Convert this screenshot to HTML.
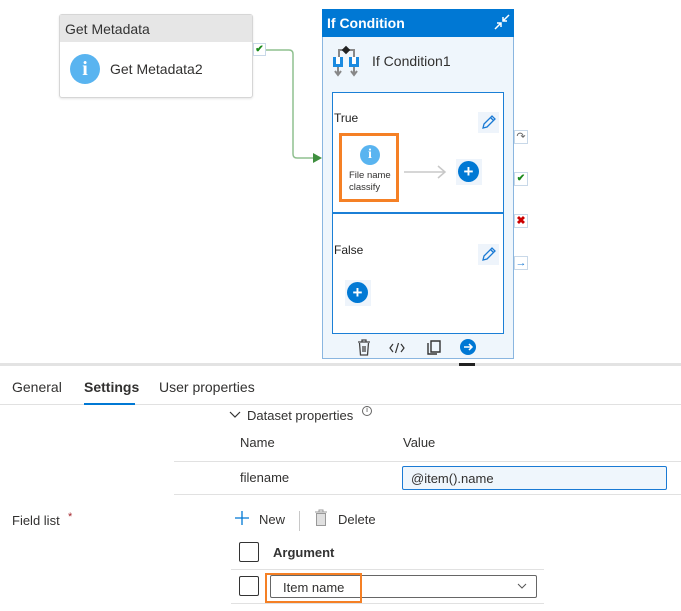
<!DOCTYPE html>
<html><head><style>
*{margin:0;padding:0;box-sizing:border-box}
body{width:681px;height:611px;background:#fff;font-family:"Liberation Sans",sans-serif;color:#323130;position:relative;overflow:hidden}
.a{position:absolute}
.t{position:absolute;white-space:nowrap;font-size:13px}
</style></head><body>
<!-- Get Metadata -->
<div class="a" style="left:59px;top:14px;width:194px;height:84px;border:1px solid #d6d6d6;border-radius:3px;background:#fff;box-shadow:0 1px 2px rgba(0,0,0,.1)"></div>
<div class="a" style="left:60px;top:15px;width:192px;height:27px;background:#e6e6e6"></div>
<div class="t" style="left:65px;top:21px;font-size:14px;color:#333">Get Metadata</div>
<div class="a" style="left:70px;top:54px;width:30px;height:30px;border-radius:50%;background:#59b4f0;color:#fff;font-weight:bold;font-size:20px;text-align:center;line-height:30px;font-family:'Liberation Serif',serif">i</div>
<div class="t" style="left:110px;top:61px;font-size:14px">Get Metadata2</div>
<div class="a" style="left:253px;top:43px;width:13px;height:13px;border:1px solid #c8d8e8;background:#fff;color:#1a8a1a;font-size:10px;line-height:11px;text-align:center;font-weight:bold">✔</div>
<svg class="a" style="left:0;top:0" width="681" height="611">
<path d="M266 50 H289 Q293 50 293 54 V154 Q293 158 297 158 H314" stroke="#8fc08f" stroke-width="1.5" fill="none"/>
<path d="M313 153 L322 158 L313 163Z" fill="#3f8f3f"/>
</svg>
<!-- If condition -->
<div class="a" style="left:322px;top:9px;width:192px;height:350px;background:#eff6fc;border:1px solid #8ab6e0"></div>
<div class="a" style="left:322px;top:9px;width:192px;height:28px;background:#0078d4"></div>
<div class="t" style="left:327px;top:15px;font-size:14px;color:#fff;font-weight:bold">If Condition</div>
<svg class="a" style="left:493px;top:13px" width="18" height="18"><path d="M2 16 L8 10 M4 10 H8 V14 M16 2 L10 8 M10 4 V8 H14" stroke="#fff" stroke-width="1.5" fill="none"/></svg>
<svg class="a" style="left:332px;top:44px" width="32" height="34">
<path d="M7 14 V6 H22 V14" stroke="#888" stroke-width="2" fill="none"/>
<rect x="11" y="3" width="6" height="6" transform="rotate(45 14 6)" fill="#222"/>
<rect x="1" y="13" width="10" height="10" fill="#1a8ae0"/><rect x="4" y="13" width="4" height="7" fill="#fff"/>
<rect x="17" y="13" width="10" height="10" fill="#1a8ae0"/><rect x="20" y="13" width="4" height="7" fill="#fff"/>
<path d="M6 23 V30 M3 27 L6 31 L9 27 M22 23 V30 M19 27 L22 31 L25 27" stroke="#888" stroke-width="2" fill="none"/>
</svg>
<div class="t" style="left:372px;top:53px;font-size:14px">If Condition1</div>
<div class="a" style="left:332px;top:92px;width:172px;height:242px;background:#fff;border:1.5px solid #1b7fd6"></div>
<div class="a" style="left:332px;top:212px;width:172px;height:2px;background:#1b7fd6"></div>
<div class="t" style="left:334px;top:111px;font-size:12px;color:#222">True</div>
<div class="t" style="left:334px;top:243px;font-size:12px;color:#222">False</div>
<svg class="a" style="left:478px;top:112px" width="21" height="21"><rect width="21" height="21" fill="#eef4fb"/><path d="M5 16 L6 12 L14 4 L17 7 L9 15 Z M12.5 5.5 L15.5 8.5" stroke="#1a7ad4" stroke-width="1.3" fill="none"/></svg>
<svg class="a" style="left:478px;top:244px" width="21" height="21"><rect width="21" height="21" fill="#eef4fb"/><path d="M5 16 L6 12 L14 4 L17 7 L9 15 Z M12.5 5.5 L15.5 8.5" stroke="#1a7ad4" stroke-width="1.3" fill="none"/></svg>
<div class="a" style="left:339px;top:133px;width:60px;height:69px;border:3px solid #f58025"></div>
<div class="a" style="left:360px;top:145px;width:20px;height:20px;border-radius:50%;background:#59b4f0;color:#fff;font-weight:bold;font-size:14px;text-align:center;line-height:20px;font-family:'Liberation Serif',serif">i</div>
<div class="t" style="left:349px;top:170px;font-size:9.5px;line-height:12px">File name<br>classify</div>
<svg class="a" style="left:400px;top:164px" width="50" height="16"><path d="M4 8 H45 M38 2 L45 8 L38 14" stroke="#c8c8c8" stroke-width="1.5" fill="none"/></svg>
<div class="a" style="left:456px;top:159px;width:26px;height:26px;background:#eef4fb"></div>
<div class="a" style="left:458px;top:161px;width:21px;height:21px;border-radius:50%;background:#0078d4;color:#fff;font-weight:bold;font-size:17px;text-align:center;line-height:21px">+</div>
<div class="a" style="left:345px;top:280px;width:26px;height:26px;background:#eef4fb"></div>
<div class="a" style="left:347px;top:282px;width:21px;height:21px;border-radius:50%;background:#0078d4;color:#fff;font-weight:bold;font-size:17px;text-align:center;line-height:21px">+</div>
<svg class="a" style="left:355px;top:338px" width="125" height="20">
<path d="M3 4 H15 M7 4 V2 H11 V4 M4.5 5 L5.5 17 H12.5 L13.5 5 M8 8 V14 M10 8 V14" stroke="#444" stroke-width="1.3" fill="none"/>
<path d="M38 6 L35 10 L38 14 M46 6 L49 10 L46 14 M43.5 5 L40.5 15" stroke="#333" stroke-width="1.2" fill="none"/>
<path d="M73 5 V16 H82 M76 3 H85 V14 H76Z" stroke="#333" stroke-width="1.4" fill="none"/>
<circle cx="113" cy="9" r="8" fill="#0078d4"/><path d="M109 9 H117 M114 6 L117 9 L114 12" stroke="#fff" stroke-width="1.5" fill="none"/>
</svg>
<!-- side icons -->
<div class="a" style="left:514px;top:130px;width:14px;height:14px;border:1px solid #c8d8e8;background:#fff;color:#666;font-size:11px;line-height:12px;text-align:center">↷</div>
<div class="a" style="left:514px;top:172px;width:14px;height:14px;border:1px solid #c8d8e8;background:#fff;color:#1a8a1a;font-size:10px;line-height:12px;text-align:center;font-weight:bold">✔</div>
<div class="a" style="left:514px;top:214px;width:14px;height:14px;border:1px solid #c8d8e8;background:#fff;color:#c00;font-size:11px;line-height:12px;text-align:center;font-weight:bold">✖</div>
<div class="a" style="left:514px;top:256px;width:14px;height:14px;border:1px solid #c8d8e8;background:#fff;color:#1a7ad4;font-size:11px;line-height:12px;text-align:center;font-weight:bold">→</div>
<!-- divider -->
<div class="a" style="left:0;top:363px;width:681px;height:3px;background:#e3e3e3"></div>
<div class="a" style="left:459px;top:363px;width:16px;height:3px;background:#222"></div>
<!-- tabs -->
<div class="t" style="left:12px;top:379px;font-size:14px">General</div>
<div class="t" style="left:84px;top:379px;font-size:14px;font-weight:bold">Settings</div>
<div class="t" style="left:159px;top:379px;font-size:14px">User properties</div>
<div class="a" style="left:0;top:404px;width:681px;height:1px;background:#e1e1e1"></div>
<div class="a" style="left:84px;top:403px;width:51px;height:2px;background:#0078d4"></div>
<svg class="a" style="left:229px;top:411px" width="12" height="8"><path d="M1 1 L6 6 L11 1" stroke="#333" stroke-width="1.2" fill="none"/></svg>
<div class="t" style="left:247px;top:408px;font-size:13px">Dataset properties</div>
<div class="a" style="left:362px;top:406px;width:10px;height:10px;border:1px solid #666;border-radius:50%;font-size:7px;text-align:center;line-height:8px">i</div>
<div class="t" style="left:240px;top:435px;font-size:13px">Name</div>
<div class="t" style="left:403px;top:435px;font-size:13px">Value</div>
<div class="a" style="left:174px;top:461px;width:507px;height:1px;background:#e1e1e1"></div>
<div class="t" style="left:240px;top:470px;font-size:13px">filename</div>
<div class="a" style="left:402px;top:466px;width:265px;height:24px;border:1px solid #1a7ad4;background:#eff6fc;border-radius:2px"></div>
<div class="t" style="left:411px;top:471px;font-size:13px">@item().name</div>
<div class="a" style="left:174px;top:494px;width:507px;height:1px;background:#e1e1e1"></div>
<div class="t" style="left:12px;top:513px;font-size:13px">Field list</div>
<div class="t" style="left:68px;top:511px;font-size:11px;color:#a4262c">*</div>
<svg class="a" style="left:234px;top:510px" width="16" height="16"><path d="M8 1 V15 M1 8 H15" stroke="#0078d4" stroke-width="1.3"/></svg>
<div class="t" style="left:259px;top:512px;font-size:13px">New</div>
<div class="a" style="left:299px;top:511px;width:1px;height:20px;background:#c8c8c8"></div>
<svg class="a" style="left:314px;top:509px" width="14" height="18"><path d="M1 3 H13 M5 3 V1 H9 V3" stroke="#999" fill="none"/><rect x="2.5" y="4.5" width="9" height="12" fill="#e0e0e0" stroke="#999"/></svg>
<div class="t" style="left:338px;top:512px;font-size:13px">Delete</div>
<div class="a" style="left:239px;top:542px;width:20px;height:20px;border:1px solid #333;border-radius:2px"></div>
<div class="t" style="left:273px;top:545px;font-size:13px;font-weight:bold;color:#333">Argument</div>
<div class="a" style="left:231px;top:569px;width:313px;height:1px;background:#e1e1e1"></div>
<div class="a" style="left:239px;top:576px;width:20px;height:20px;border:1px solid #333;border-radius:2px"></div>
<div class="a" style="left:270px;top:575px;width:267px;height:23px;border:1px solid #666;border-radius:2px"></div>
<div class="t" style="left:283px;top:580px;font-size:13px">Item name</div>
<svg class="a" style="left:517px;top:583px" width="10" height="7"><path d="M1 1 L5 5 L9 1" stroke="#555" stroke-width="1" fill="none"/></svg>
<div class="a" style="left:265px;top:573px;width:97px;height:30px;border:2px solid #f58025"></div>
<div class="a" style="left:231px;top:603px;width:313px;height:1px;background:#e1e1e1"></div>
</body></html>
